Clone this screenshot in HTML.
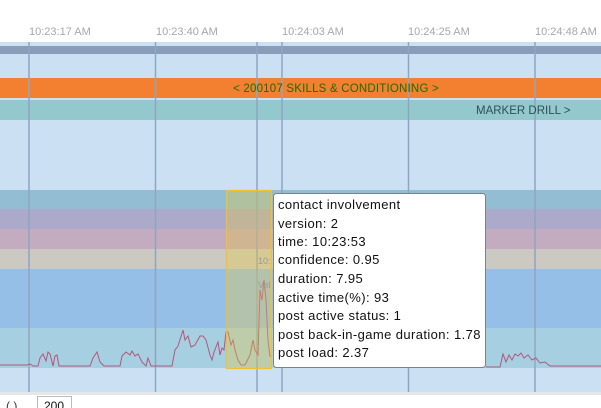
<!DOCTYPE html>
<html><head><meta charset="utf-8"><style>
html,body{margin:0;padding:0;width:601px;height:408px;overflow:hidden;background:#fff;font-family:"Liberation Sans",sans-serif}
</style></head><body>
<svg width="601" height="408" xmlns="http://www.w3.org/2000/svg" style="position:absolute;left:0;top:0">
<g font-family="Liberation Sans, sans-serif" font-size="11" fill="#a6a6ad">
<text x="29" y="35">10:23:17 AM</text>
<text x="156" y="35">10:23:40 AM</text>
<text x="282" y="35">10:24:03 AM</text>
<text x="408" y="35">10:24:25 AM</text>
<text x="535" y="35">10:24:48 AM</text>
</g>
<rect x="0" y="42" width="601" height="350" fill="#cbe0f3"/>
<rect x="0" y="46" width="601" height="8" fill="#899db8"/>
<rect x="0" y="78" width="601" height="20" fill="#f28030"/>
<rect x="0" y="100" width="601" height="20" fill="#93c9cd"/>
<rect x="0" y="190" width="601" height="19" fill="#93bdd3"/>
<rect x="0" y="209" width="601" height="20" fill="#abaaca"/>
<rect x="0" y="229" width="601" height="20" fill="#c3abc0"/>
<rect x="0" y="249" width="601" height="20" fill="#cbc9c2"/>
<rect x="0" y="269" width="601" height="59" fill="#95bfe6"/>
<rect x="0" y="328" width="601" height="40" fill="#a7cfe2"/>
<rect x="0" y="392" width="601" height="3" fill="#e4e6ea"/>
<g stroke="#8fa5c0" stroke-width="1.5">
<line x1="29" y1="42" x2="29" y2="392"/><line x1="155.5" y1="42" x2="155.5" y2="392"/>
<line x1="257" y1="42" x2="257" y2="392"/><line x1="282" y1="42" x2="282" y2="392"/>
<line x1="408.5" y1="42" x2="408.5" y2="392"/><line x1="535" y1="42" x2="535" y2="392"/>
</g>
<text x="336" y="92" text-anchor="middle" font-size="11.5" letter-spacing="0.2" fill="#1a6e00">&lt; 200107 SKILLS &amp; CONDITIONING &gt;</text>
<text x="476" y="114" font-size="11.5" fill="#2f4f5a">MARKER DRILL &gt;</text>
<polyline fill="none" stroke="#b2577a" stroke-width="1" points="0,365 27,365 30,364 33,366 38,366 40,358 43,354 46,361 48,352 50,354 53,366 55,356 57,355 59,366 90,366 93,358 97,352 100,362 104,366 120,366 122,356 126,352 130,355 132,351 135,356 138,354 142,362 146,366 148,358 151,366 172,366 175,350 178,346 183,330 185,340 188,336 191,347 195,345 200,336 203,336 206,340 210,355 212,360 214,352 218,342 220,355 222,348 224,350 226,332 228,332 231,345 233,340 235,350 238,360 241,365 245,365 250,355 253,340 255,350 258,355 260,290 262,300 264,280 266,300 268,340 270,357"/>
<polyline fill="none" stroke="#b2577a" stroke-width="1" points="486,367 500,367 503,354 506,362 509,355 512,360 515,354 518,356 521,353 524,358 528,355 532,360 536,358 540,363 545,362 550,366 601,366"/>
<rect x="226.5" y="190.5" width="45" height="178" fill="#e8c840" fill-opacity="0.35" stroke="#f0c030" stroke-width="1.2"/>
<text x="258" y="264" font-size="9" fill="#999">10:</text>
<text x="258" y="288" font-size="9" fill="#999">Vel</text>
<rect x="273.5" y="193.5" width="212" height="174" rx="3" fill="#fff" stroke="#7a8290" stroke-width="1"/>
<g font-size="13" letter-spacing="0.4" fill="#111">
<text x="278" y="209">contact involvement</text>
<text x="278" y="228">version: 2</text>
<text x="278" y="246">time: 10:23:53</text>
<text x="278" y="264">confidence: 0.95</text>
<text x="278" y="283">duration: 7.95</text>
<text x="278" y="302">active time(%): 93</text>
<text x="278" y="320">post active status: 1</text>
<text x="278" y="339">post back-in-game duration: 1.78</text>
<text x="278" y="357">post load: 2.37</text>
</g>
<text x="6" y="410" font-size="12" fill="#333">( )</text>
<rect x="37.5" y="396.5" width="34" height="16" fill="#fff" stroke="#bbb"/>
<text x="44" y="410" font-size="12" fill="#111">200</text>
</svg>
</body></html>
